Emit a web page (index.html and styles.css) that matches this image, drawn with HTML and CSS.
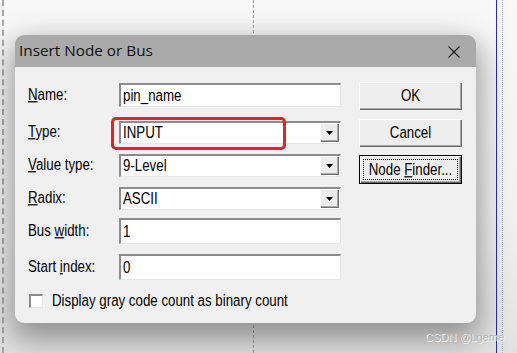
FILE: index.html
```html
<!DOCTYPE html>
<html>
<head>
<meta charset="utf-8">
<link rel="stylesheet" href="styles.css">
</head>
<body>
<div class="screen">
  <div class="guide guide-left"></div>
  <div class="guide guide-mid"></div>
  <div class="guide guide-blue"></div>
  <div class="guide guide-dots"></div>

  <div class="dialog">
    <div class="titlebar">
      <span class="title">Insert Node or Bus</span>
      <svg class="close" width="12" height="12" viewBox="0 0 12 12"><path d="M0.5 0.5 L11.5 11.5 M11.5 0.5 L0.5 11.5" stroke="#1a1a1a" stroke-width="1.1" fill="none"/></svg>
    </div>
    <div class="content">
      <div class="form">
        <div class="row">
          <span class="lbl t"><span class="ak">N</span>ame:</span>
          <div class="field h24"><span class="val t">pin_name</span></div>
        </div>
        <div class="row row-type">
          <span class="lbl t"><span class="ak">T</span>ype:</span>
          <div class="field combo h23"><span class="val t">INPUT</span><span class="drop"><svg width="7" height="4" viewBox="0 0 7 4"><path d="M0 0 H7 L3.5 4 Z" fill="#000"/></svg></span></div>
        </div>
        <div class="row">
          <span class="lbl t"><span class="ak">V</span>alue type:</span>
          <div class="field combo h23"><span class="val t">9-Level</span><span class="drop"><svg width="7" height="4" viewBox="0 0 7 4"><path d="M0 0 H7 L3.5 4 Z" fill="#000"/></svg></span></div>
        </div>
        <div class="row">
          <span class="lbl t"><span class="ak">R</span>adix:</span>
          <div class="field combo h23"><span class="val t">ASCII</span><span class="drop"><svg width="7" height="4" viewBox="0 0 7 4"><path d="M0 0 H7 L3.5 4 Z" fill="#000"/></svg></span></div>
        </div>
        <div class="row">
          <span class="lbl t">Bus <span class="ak">w</span>idth:</span>
          <div class="field h26"><span class="val t">1</span></div>
        </div>
        <div class="row row-start">
          <span class="lbl t">Start <span class="ak">i</span>ndex:</span>
          <div class="field h26"><span class="val t">0</span></div>
        </div>
        <div class="row row-check">
          <span class="checkbox"></span>
          <span class="check-text t">Display <span class="ak">g</span>ray code count as binary count</span>
        </div>
      </div>
      <div class="buttons">
        <div class="btn"><span class="t">OK</span></div>
        <div class="btn"><span class="t">Cancel</span></div>
        <div class="btn btn-default"><span class="focus"><span class="t">Node <span class="ak">F</span>inder...</span></span></div>
      </div>
    </div>
    <div class="highlight"></div>
  </div>

  <div class="watermark">CSDN @Lgeme</div>
</div>
</body>
</html>
```

FILE: styles.css
```css
html, body {
  margin: 0;
  padding: 0;
}

.screen {
  position: relative;
  width: 517px;
  height: 353px;
  overflow: hidden;
  background: linear-gradient(to bottom, #f8f8f8 0%, #f1f1f1 60%, #e2e2e2 100%);
  font-family: "Liberation Sans", Arial, sans-serif;
}

.guide {
  position: absolute;
  top: 0;
  bottom: 0;
  width: 0;
}

.guide-left {
  left: 2px;
  border-left: 2px dashed #a8a8a8;
}

.guide-mid {
  left: 253px;
  border-left: 1px dashed #a0a0a0;
}

.guide-blue {
  left: 496px;
  border-left: 1px solid #2b2ba8;
}

.guide-dots {
  left: 502px;
  border-left: 1px dotted #b0b0b0;
}

.dialog {
  position: absolute;
  left: 15px;
  top: 35px;
  width: 461px;
  height: 288px;
  background: #f0f0f0;
  border-radius: 9px;
  overflow: hidden;
  box-shadow: 0 12px 30px 4px rgba(0, 0, 0, 0.38);
}

.titlebar {
  height: 32px;
  background: #aaaaaa;
  display: flex;
  align-items: center;
  justify-content: space-between;
  padding: 0 16px 0 4px;
}

.title {
  font-family: "Open Sans", "Noto Sans", sans-serif;
  font-size: 15.3px;
  color: #111;
  line-height: 1;
}

.close {
  display: block;
  margin-top: 2px;
}

.content {
  display: flex;
  padding: 13px 0 0 13px;
}

.form {
  display: flex;
  flex-direction: column;
  gap: 3px;
  width: 313px;
}

.row {
  height: 30px;
  display: flex;
  align-items: center;
  font-size: 13.3px;
  color: #000;
}

.t {
  display: inline-block;
  transform: scaleY(1.22);
  line-height: 1;
}

.row-type {
  margin-top: 4px;
}

.row-start {
  margin-top: 3px;
}

.row-check {
  margin-top: 1px;
  padding-left: 1px;
}

.lbl {
  width: 91px;
  flex: none;
  white-space: nowrap;
}

.ak {
  text-decoration: underline;
  text-underline-offset: 1px;
  text-decoration-thickness: 1px;
}

.field {
  position: relative;
  flex: 1;
  background: #fff;
  display: flex;
  align-items: center;
  box-sizing: border-box;
  border-top: 2px solid #8c8c8c;
  border-left: 2px solid #8c8c8c;
  border-right: 1px solid #e6e6e6;
  border-bottom: 1px solid #e6e6e6;
  padding-left: 2px;
}

.h23 { height: 23px; }
.h24 { height: 24px; }
.h26 { height: 26px; }

.val {
  white-space: nowrap;
}

.combo .val {
  flex: 1;
}

.drop {
  width: 19px;
  height: 19px;
  margin-right: 1px;
  background: #ececec;
  display: flex;
  align-items: center;
  justify-content: center;
  box-sizing: border-box;
  box-shadow: inset 1px 1px 0 #ffffff, inset -1px -1px 0 #6f6f6f, inset -2px -2px 0 #a8a8a8;
}

.checkbox {
  width: 14px;
  height: 14px;
  box-sizing: border-box;
  background: #fff;
  border-top: 2px solid #8c8c8c;
  border-left: 2px solid #8c8c8c;
  border-right: 1px solid #e6e6e6;
  border-bottom: 1px solid #e6e6e6;
  margin-right: 9px;
  flex: none;
}

.check-text {
  white-space: nowrap;
}

.buttons {
  display: flex;
  flex-direction: column;
  gap: 9px;
  margin-left: 18px;
  margin-top: 2px;
  width: 103px;
}

.btn {
  height: 28px;
  box-sizing: border-box;
  background: #eeeeee;
  display: flex;
  align-items: center;
  justify-content: center;
  font-size: 13.3px;
  color: #000;
  box-shadow: inset 1px 1px 0 #ffffff, inset -1px -1px 0 #6a6a6a, inset -2px -2px 0 #a6a6a6;
}

.btn-default {
  height: 29px;
  margin-top: -1px;
  border: 1px solid #000;
  padding: 3px;
}

.focus {
  flex: 1;
  align-self: stretch;
  display: flex;
  align-items: center;
  justify-content: center;
  border: 1px dotted #000;
  white-space: nowrap;
}

.highlight {
  position: absolute;
  left: 96px;
  top: 82px;
  width: 175px;
  height: 33px;
  box-sizing: border-box;
  border: 3px solid #e5251d;
  border-radius: 5px;
}

.watermark {
  position: absolute;
  right: 13px;
  top: 331px;
  font-family: "Liberation Sans", Arial, sans-serif;
  font-size: 11px;
  color: #b5b5b5;
  text-shadow: 1px 1px 0 #f4f4f4;
}
```
